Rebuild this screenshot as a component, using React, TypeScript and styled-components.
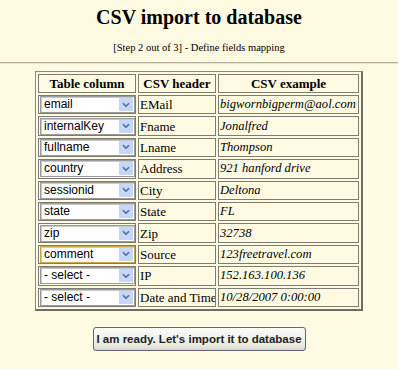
import styled, { createGlobalStyle } from 'styled-components';

const GlobalStyle = createGlobalStyle`
  html, body {
    margin: 0;
    padding: 0;
    background: #fffbe2;
  }
  body {
    font-family: 'Liberation Serif', 'Times New Roman', serif;
    color: #000;
  }
`;

const Page = styled.div`
  width: 398px;
  height: 369px;
  display: flex;
  flex-direction: column;
  align-items: center;
  overflow: hidden;
`;

const Title = styled.h1`
  margin: 6px 0 0;
  font-size: 20px;
  line-height: 23px;
  font-weight: bold;
`;

const Subtitle = styled.div`
  margin-top: 12px;
  font-size: 10.5px;
  line-height: 13px;
`;

const Rule = styled.div`
  align-self: stretch;
  margin-top: 8px;
  border-top: 1px solid #b0ac9a;
  border-bottom: 1px solid #e8e4cf;
`;

const Table = styled.table`
  margin-top: 7px;
  width: 328px;
  table-layout: fixed;
  border-collapse: separate;
  border-spacing: 2px;
  border: 1px solid #8a8a80;
  border-right-width: 2px;
  border-bottom-width: 2px;
  border-right-color: #6e6e66;
  border-bottom-color: #6e6e66;
`;

const Th = styled.th`
  height: 17px;
  padding: 0;
  border: 1px solid #7c7c74;
  font-size: 13px;
  font-weight: bold;
  text-align: center;
  line-height: 17px;
  white-space: nowrap;
`;

const Td = styled.td<{ $italic?: boolean }>`
  height: 17.4px;
  padding: 0 0 0 1px;
  border: 1px solid #7c7c74;
  font-size: ${(p) => (p.$italic ? '12.6px' : '13px')};
  line-height: 17px;
  font-style: ${(p) => (p.$italic ? 'italic' : 'normal')};
  white-space: nowrap;
  overflow: hidden;
`;

const SelectBox = styled.div<{ $focus?: boolean }>`
  position: relative;
  width: 95px;
  height: 17px;
  border: 1px solid ${(p) => (p.$focus ? '#c8a64a' : '#9b9b9b')};
  box-shadow: inset 1px 1px 0 ${(p) => (p.$focus ? '#e2cd8a' : '#c9c9c9')};
  background: #fff;
  box-sizing: border-box;
`;

const Select = styled.select`
  appearance: none;
  display: block;
  width: 100%;
  height: 15px;
  line-height: 15px;
  border: none;
  outline: none;
  background: transparent;
  padding: 0 0 0 3px;
  margin: 0;
  font-family: 'Liberation Sans', Arial, sans-serif;
  font-size: 12px;
  color: #000;
`;

const Arrow = styled.span`
  position: absolute;
  top: 1px;
  right: 1px;
  width: 14px;
  height: 13px;
  background: #c6d6f7;
  display: flex;
  align-items: center;
  justify-content: center;
  pointer-events: none;
`;

const Button = styled.button`
  margin-top: 16px;
  width: 213px;
  height: 24px;
  border: 1px solid #5f6670;
  border-radius: 3px;
  background: linear-gradient(#fbfbf8, #e9e9e3 80%, #d6d6cf);
  font-family: 'Liberation Sans', Arial, sans-serif;
  font-size: 11.5px;
  font-weight: bold;
  color: #222;
  padding: 0;
  white-space: nowrap;
`;

const rows = [
  { col: 'email', header: 'EMail', example: 'bigwornbigperm@aol.com' },
  { col: 'internalKey', header: 'Fname', example: 'Jonalfred' },
  { col: 'fullname', header: 'Lname', example: 'Thompson' },
  { col: 'country', header: 'Address', example: '921 hanford drive' },
  { col: 'sessionid', header: 'City', example: 'Deltona' },
  { col: 'state', header: 'State', example: 'FL' },
  { col: 'zip', header: 'Zip', example: '32738' },
  { col: 'comment', header: 'Source', example: '123freetravel.com', focus: true },
  { col: '- select -', header: 'IP', example: '152.163.100.136' },
  { col: '- select -', header: 'Date and Time', example: '10/28/2007 0:00:00' },
];

function ChevronIcon() {
  return (
    <svg width="8" height="6" viewBox="0 0 8 6">
      <path d="M1 1.2 L4 4.2 L7 1.2" fill="none" stroke="#4d6a9c" strokeWidth="1.6" />
    </svg>
  );
}

export default function App() {
  return (
    <Page>
      <GlobalStyle />
      <Title>CSV import to database</Title>
      <Subtitle>[Step 2 out of 3] - Define fields mapping</Subtitle>
      <Rule />
      <Table>
        <colgroup>
          <col style={{ width: 98 }} />
          <col style={{ width: 78 }} />
          <col />
        </colgroup>
        <thead>
          <tr>
            <Th>Table column</Th>
            <Th>CSV header</Th>
            <Th>CSV example</Th>
          </tr>
        </thead>
        <tbody>
          {rows.map((r, i) => (
            <tr key={i}>
              <Td>
                <SelectBox $focus={r.focus}>
                  <Select defaultValue={r.col}>
                    <option>{r.col}</option>
                  </Select>
                  <Arrow>
                    <ChevronIcon />
                  </Arrow>
                </SelectBox>
              </Td>
              <Td>{r.header}</Td>
              <Td $italic>{r.example}</Td>
            </tr>
          ))}
        </tbody>
      </Table>
      <Button>I am ready. Let's import it to database</Button>
    </Page>
  );
}
